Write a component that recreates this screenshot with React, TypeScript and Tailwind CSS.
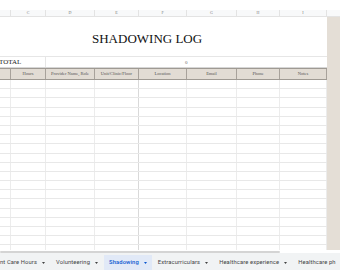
import React from 'react';

const cols = [11, 35, 49, 44, 48, 50, 43, 47];
const letters = ['', 'C', 'D', 'E', 'F', 'G', 'H', 'I'];
const headers = ['', 'Hours', 'Provider Name, Role', 'Unit/Clinic/Floor', 'Location', 'Email', 'Phone', 'Notes'];
const tabs = ['nt Care Hours', 'Volunteering', 'Shadowing', 'Extracurriculars', 'Healthcare experience', 'Healthcare ph'];

function Caret() {
  return (
    <svg width="3" height="2" viewBox="0 0 3 2" className="ml-[5px] shrink-0">
      <path d="M0 0 L3 0 L1.5 2 Z" fill="currentColor" />
    </svg>
  );
}

export default function App() {
  const rows = Array.from({ length: 19 });

  return (
    <div className="w-[340px] h-[270px] overflow-hidden bg-white flex flex-col" style={{ fontFamily: '"Liberation Serif", serif' }}>
      <div className="h-[10px] shrink-0" />

      {/* column letters */}
      <div className="h-[7px] shrink-0 flex bg-[#f8f9fa] border-b border-[#e3e3e3]">
        {cols.map((w, i) => (
          <div
            key={i}
            style={{ width: w }}
            className="border-r border-[#e3e3e3] flex items-center justify-center text-[4px] leading-none text-[#777]"
          >
            {letters[i]}
          </div>
        ))}
        <div className="flex-1" />
      </div>

      <div className="flex flex-1 min-h-0">
        <div className="w-[327px] flex flex-col">
          {/* title */}
          <div className="h-[40px] shrink-0 flex items-center pl-[92px] pt-[3px] border-b border-[#e6e6e6]">
            <span className="text-[13px] leading-none text-[#111]">SHADOWING LOG</span>
          </div>

          {/* total */}
          <div className="h-[11px] shrink-0 flex items-center border-b border-[#d6d6d6]">
            <div className="w-[46px] h-full border-r border-[#e6e6e6] flex items-center">
              <span className="text-[7px] leading-none text-[#222] -ml-[1px] pt-[1px]">TOTAL</span>
            </div>
            <div className="w-[139px]" />
            <span className="text-[5px] leading-none text-[#666] pt-[1px]">0</span>
          </div>

          {/* header */}
          <div className="h-[12px] shrink-0 flex bg-[#e2dcd4] border-y border-[#9f9a93]">
            {cols.map((w, i) => (
              <div
                key={i}
                style={{ width: w }}
                className="border-r border-[#a8a29b] flex items-center justify-center text-[4.5px] leading-none text-[#555] whitespace-nowrap"
              >
                {headers[i]}
              </div>
            ))}
          </div>

          {/* data rows */}
          <div className="flex-1 min-h-0 overflow-hidden">
            {rows.map((_, r) => (
              <div key={r} className="h-[9.2px] flex border-b border-[#e8e8e8]">
                {cols.map((w, i) => (
                  <div
                    key={i}
                    style={{ width: w }}
                    className={i === 3 ? 'border-r border-[#d9d9d9]' : 'border-r border-[#ececec]'}
                  />
                ))}
              </div>
            ))}
          </div>
        </div>
        <div className="flex-1 bg-[#e4ded6]" />
      </div>

      {/* scrollbar */}
      <div className="h-[3px] shrink-0 bg-white flex items-center">
        <div className="w-[280px] h-[2px] bg-[#d4d4d4] rounded-full" />
      </div>

      {/* sheet tabs */}
      <div
        className="h-[17px] shrink-0 bg-[#f1f3f4] flex items-end gap-[1px] text-[5.8px] tracking-[0.12px] text-[#444] whitespace-nowrap -ml-[5px]"
        style={{ fontFamily: 'Roboto, "Liberation Sans", sans-serif' }}
      >
        {tabs.map((t, i) => (
          <div
            key={i}
            className={
              i === 2
                ? 'h-[15px] flex items-center px-[5px] bg-[#e1e9f7] text-[#0b57d0] font-medium'
                : 'h-[15px] flex items-center px-[5px]'
            }
          >
            {t}
            {i < tabs.length - 1 && <Caret />}
          </div>
        ))}
      </div>
    </div>
  );
}
